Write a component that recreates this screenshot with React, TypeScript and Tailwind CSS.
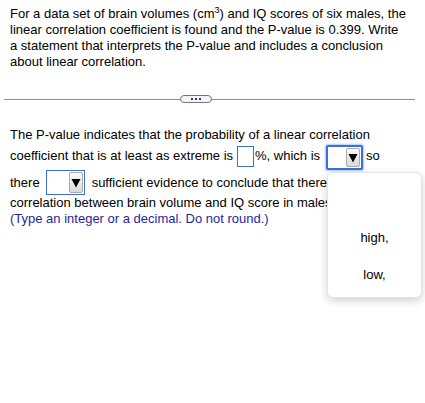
import React from 'react';

const Arrow = () => (
	<span className="absolute right-[1px] top-[1px] bottom-[1px] w-[14px] flex items-center justify-center rounded-[2px] border border-[#a9a9a9] bg-gradient-to-b from-[#fafafa] to-[#d9d9d9]">
		<svg width="10" height="10" viewBox="0 0 10 10">
			<path d="M0.5 1 H9.5 L5 9.5 Z" fill="#000" />
		</svg>
	</span>
);

const Select = ({ focused }: { focused?: boolean }) => (
	<span
		className={
			focused
				? 'relative shrink-0 inline-block w-[37px] h-[25px] rounded-[2px] border-2 border-[#3d6fd6] shadow-[0_0_2px_1px_rgba(80,130,230,0.45)] bg-white'
				: 'relative shrink-0 inline-block w-[39px] h-[25px] border border-[#3d6fd6] bg-white'
		}
	>
		<Arrow />
	</span>
);

export default function App() {
	return (
		<div
			className="relative w-[425px] h-[403px] bg-white text-black text-[13px] overflow-hidden"
			style={{ fontFamily: '"Liberation Sans", Arial, sans-serif' }}
		>
			<div className="pl-[10px] pt-[6px]">
				<p className="w-[398px] leading-[16px]">
					For a data set of brain volumes (cm
					<span className="relative -top-[5px] text-[9px] leading-none">3</span>) and IQ scores of six males, the
					linear correlation coefficient is found and the P-value is 0.399. Write a statement that interprets the
					P-value and includes a conclusion about linear correlation.
				</p>
			</div>

			<div className="relative mt-[25px] mx-[4px] w-[411px] h-[8px] flex items-center">
				<div className="w-full h-px bg-[#8b91a1]" />
				<span className="absolute left-[176px] top-0 w-[32px] h-[8px] rounded-full border border-[#6f7585] bg-[#f4f5f7] flex items-center justify-center gap-[2px]">
					<span className="w-[2px] h-[2px] bg-[#333a4a]" />
					<span className="w-[2px] h-[2px] bg-[#333a4a]" />
					<span className="w-[2px] h-[2px] bg-[#333a4a]" />
				</span>
			</div>

			<div className="pl-[10px] pt-[22px] whitespace-nowrap">
				<div className="h-[20px] leading-[20px]">
					The P-value indicates that the probability of a linear correlation
				</div>
				<div className="h-[25px] flex items-start">
					<span className="leading-[22px]">coefficient that is at least as extreme is</span>
					<span className="ml-[4px] mt-[1px] w-[17px] h-[21px] border border-[#3d6fd6] bg-white shrink-0" />
					<span className="leading-[22px] ml-[1px]">%, which is</span>
					<span className="ml-[6px]">
						<Select focused />
					</span>
					<span className="leading-[22px] ml-[3px]">so</span>
				</div>
				<div className="h-[25px] flex items-center">
					<span>there</span>
					<span className="ml-[6px] flex">
						<Select />
					</span>
					<span className="ml-[7px]">sufficient evidence to conclude that there</span>
				</div>
				<div className="h-[16px] leading-[16px]">correlation between brain volume and IQ score in males.</div>
				<div className="h-[16px] leading-[16px] text-[#1f1fa0]">(Type an integer or a decimal. Do not round.)</div>
			</div>

			<div className="absolute z-10 left-[327px] top-[172px] w-[95px] h-[126px] rounded-[6px] bg-white border border-[#e4e4e4] shadow-[0_3px_8px_rgba(0,0,0,0.18)] flex flex-col items-center">
				<span className="mt-[57px] leading-[16px]">high,</span>
				<span className="mt-[21px] leading-[16px]">low,</span>
			</div>
		</div>
	);
}
